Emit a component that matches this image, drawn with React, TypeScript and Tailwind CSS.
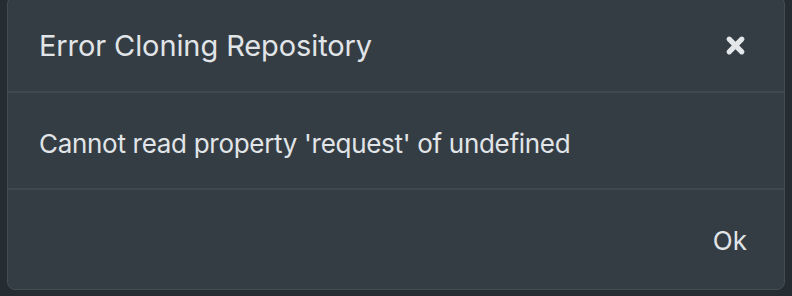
export default function App() {
  return (
    <div className="h-[296px] w-[792px] overflow-hidden bg-[#262d32] px-[7px] font-['Inter',sans-serif]">
      <div className="mt-[-4px] h-[294px] rounded-lg border border-[#434d54] bg-[#353d44] text-[#e1e5e8] flex flex-col">
        <div className="h-[96px] flex items-center justify-between pl-[31px] pr-[38px] pt-[2px] border-b-2 border-[#3e484f]">
          <h2 className="text-[29px] leading-none tracking-[-0.1px]">Error Cloning Repository</h2>
          <svg width="21" height="21" viewBox="0 0 20 20" aria-hidden="true">
            <path d="M4 4 L16 16 M16 4 L4 16" stroke="#e3e7ea" strokeWidth="5" strokeLinecap="round" />
          </svg>
        </div>
        <div className="h-[97px] flex items-center pl-[31px] pt-[6px] border-b-2 border-[#3e484f]">
          <p className="text-[26px] leading-none tracking-[-0.3px]">Cannot read property 'request' of undefined</p>
        </div>
        <div className="flex-1 flex items-center justify-end pr-[37px] pt-[3px]">
          <button className="text-[26px] leading-none">Ok</button>
        </div>
      </div>
    </div>
  )
}
